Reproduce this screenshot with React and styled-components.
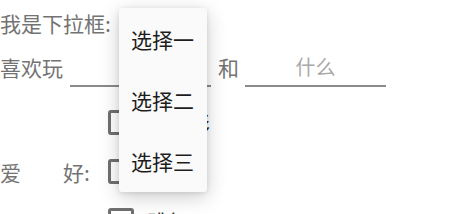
import React from 'react'
import styled, { createGlobalStyle } from 'styled-components'

const GlobalStyle = createGlobalStyle`
  html, body {
    margin: 0;
    padding: 0;
    background: #ffffff;
  }
  body {
    font-family: "Noto Sans CJK SC", "Noto Sans", sans-serif;
    width: 450px;
    height: 214px;
    overflow: hidden;
  }
`

const Page = styled.div`
  display: flex;
  flex-direction: column;
  width: 450px;
`

const SpinnerRow = styled.div`
  position: relative;
  display: flex;
  align-items: center;
  height: 46px;
`

const Label = styled.span`
  font-size: 21px;
  color: #737373;
  white-space: nowrap;
  flex-shrink: 0;
  width: ${p => (p.$width ? `${p.$width}px` : 'auto')};
`

const Spinner = styled.div`
  margin-left: 18px;
  font-size: 21px;
  color: #212121;
`

const DropMenu = styled.div`
  position: absolute;
  left: 119px;
  top: 8px;
  width: 88px;
  display: flex;
  flex-direction: column;
  background: #fafafa;
  border-radius: 3px;
  box-shadow: 0 5px 20px rgba(0, 0, 0, 0.2), 0 1px 5px rgba(0, 0, 0, 0.1);
  z-index: 5;
`

const MenuItem = styled.div`
  height: 61.3px;
  display: flex;
  align-items: center;
  padding-left: 12px;
  font-size: 21px;
  color: #1d1d1d;
  white-space: nowrap;
`

const InputRow = styled.div`
  display: flex;
  align-items: center;
  height: 42px;
`

const Field = styled.input`
  box-sizing: border-box;
  width: 141px;
  height: 38px;
  margin-top: 1px;
  margin-left: ${p => p.$gap}px;
  border: none;
  border-bottom: 2px solid #8a8a8a;
  background: transparent;
  outline: none;
  padding: 0;
  font-family: inherit;
  font-size: 20px;
  text-align: center;
  color: #212121;

  &::placeholder {
    color: #a8a8a8;
  }
`

const Joiner = styled(Label)`
  margin-left: 7px;
`

const HobbySection = styled.div`
  display: flex;
  align-items: center;
  padding-top: 10px;
`

const CheckList = styled.div`
  display: flex;
  flex-direction: column;
`

const CheckRow = styled.label`
  display: flex;
  align-items: center;
  height: 49px;
  gap: 13px;
`

const Box = styled.span`
  box-sizing: border-box;
  width: 26px;
  height: 25px;
  border: 3px solid #707070;
  border-radius: 3px;
  flex-shrink: 0;
`

const CheckText = styled.span`
  font-size: 21px;
  color: #1d1d1d;
`

const hobbies = ['看电影', '篮球', '跳舞']

export default function App() {
  return (
    <Page>
      <GlobalStyle />
      <SpinnerRow>
        <Label>我是下拉框:</Label>
        <Spinner>选择一</Spinner>
        <DropMenu>
          <MenuItem>选择一</MenuItem>
          <MenuItem>选择二</MenuItem>
          <MenuItem>选择三</MenuItem>
        </DropMenu>
      </SpinnerRow>
      <InputRow>
        <Label $width={63}>喜欢玩</Label>
        <Field $gap={7} />
        <Joiner>和</Joiner>
        <Field $gap={6} placeholder="什么" />
      </InputRow>
      <HobbySection>
        <Label $width={108}>爱　　好:</Label>
        <CheckList>
          {hobbies.map(h => (
            <CheckRow key={h}>
              <Box />
              <CheckText>{h}</CheckText>
            </CheckRow>
          ))}
        </CheckList>
      </HobbySection>
    </Page>
  )
}
